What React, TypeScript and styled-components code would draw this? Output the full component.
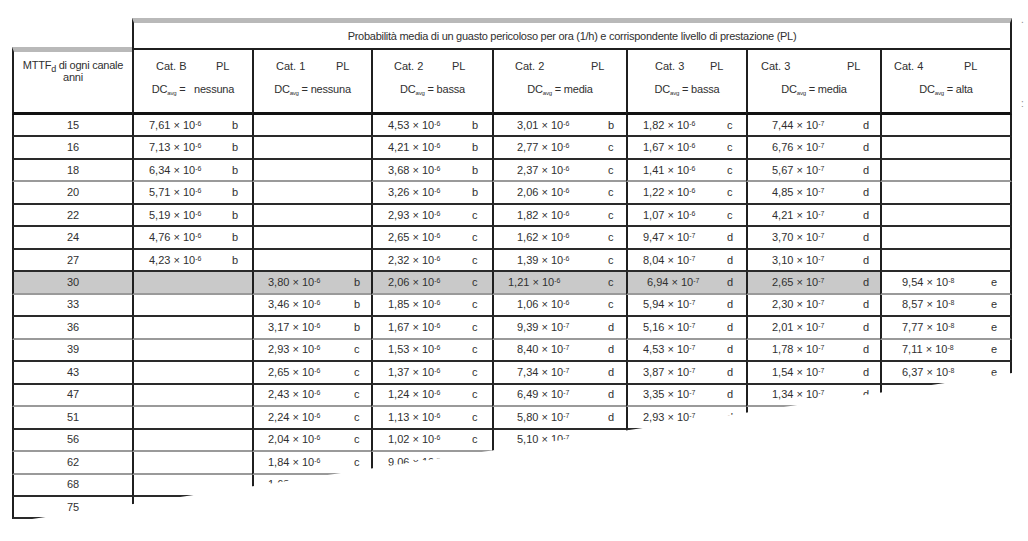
import styled, { createGlobalStyle } from 'styled-components';

const GlobalStyle = createGlobalStyle`
  html, body { margin: 0; padding: 0; background: #fff; }
  body {
    font-family: "Liberation Sans", Arial, sans-serif;
    color: #303030;
    -webkit-font-smoothing: antialiased;
  }
`;

const LINE = '#1f1f1f';
const GRAY_RULE = '#9a9a9a';
const BAR = '#b9b9b9';
const SHADE = '#c9c9c9';

type Val = [string, string, string] | null;
type Rule = 'd' | 'g';

const WIDTHS = [120, 120, 119, 121, 134, 120, 134, 132];
const MTTF = [15, 16, 18, 20, 22, 24, 27, 30, 33, 36, 39, 43, 47, 51, 56, 62, 68, 75];
const RULES: Rule[] = ['d', 'd', 'g', 'd', 'd', 'd', 'd', 'g', 'd', 'g', 'd', 'd', 'g', 'd', 'g', 'g', 'd', 'd'];
const SHADED_ROW = 7;

const fill = (n: number): Val[] => Array.from({ length: n }, () => null);
const list = (items: string, exp: string, pl: string): Val[] =>
  items.split(' ').map((m) => [m, exp, pl] as Val);

interface Column {
  cat: string;
  dc: string;
  catX: number;
  plX: number;
  pad: number;
  lx: number;
  shade: boolean;
  data: Val[];
  padFix?: Record<number, number>;
}

const COLUMNS: Column[] = [
  {
    cat: 'Cat. B', dc: '=\u00a0\u00a0 nessuna', catX: 24, plX: 84, pad: 17, lx: 100, shade: true,
    data: [...list('7,61 7,13 6,34 5,71 5,19 4,76 4,23', '-6', 'b'), ...fill(11)],
  },
  {
    cat: 'Cat. 1', dc: '= nessuna', catX: 24, plX: 84, pad: 16, lx: 102, shade: true,
    data: [
      ...fill(7),
      ...list('3,80 3,46 3,17', '-6', 'b'),
      ...list('2,93 2,65 2,43 2,24 2,04 1,84 1,68 1,52', '-6', 'c'),
    ],
  },
  {
    cat: 'Cat. 2', dc: '= bassa', catX: 23, plX: 81, pad: 17, lx: 101, shade: true,
    data: [
      ...list('4,53 4,21 3,68 3,26', '-6', 'b'),
      ...list('2,93 2,65 2,32 2,06 1,85 1,67 1,53 1,37 1,24 1,13 1,02', '-6', 'c'),
      ...list('9,06 8,17 7,31', '-7', 'd'),
    ],
  },
  {
    cat: 'Cat. 2', dc: '= media', catX: 23, plX: 99, pad: 25, lx: 116, shade: true,
    padFix: { 7: 16 },
    data: [
      ...list('3,01', '-6', 'b'),
      ...list('2,77 2,37 2,06 1,82 1,62 1,39 1,21 1,06', '-6', 'c'),
      ...list('9,39 8,40 7,34 6,49 5,80 5,10 4,43 3,84 3,26', '-7', 'd'),
    ],
  },
  {
    cat: 'Cat. 3', dc: '= bassa', catX: 29, plX: 84, pad: 17, lx: 101, shade: true,
    padFix: { 7: 21 },
    data: [
      ...list('1,82 1,67 1,41 1,22 1,07', '-6', 'c'),
      ...list('9,47 8,04 6,94 5,94 5,16 4,53 3,87 3,35 2,93 2,52 2,10 1,78 1,48', '-7', 'd'),
    ],
  },
  {
    cat: 'Cat. 3', dc: '= media', catX: 15, plX: 101, pad: 26, lx: 117, shade: true,
    data: [...list('7,44 6,76 5,67 4,85 4,21 3,70 3,10 2,65 2,30 2,01 1,78 1,54 1,34', '-7', 'd'), ...fill(5)],
  },
  {
    cat: 'Cat. 4', dc: '= alta', catX: 14, plX: 84, pad: 22, lx: 111, shade: false,
    data: [...fill(7), ...list('9,54 8,57 7,77 7,11 6,37', '-8', 'e'), ...fill(6)],
  },
];

export default function App() {
  return (
    <>
      <GlobalStyle />
      <Page>
        <Table>
          <Corner>
            MTTF<Sub>d</Sub> di ogni canale
            <br />
            anni
          </Corner>
          <TitleCell>
            Probabilità media di un guasto pericoloso per ora (1/h) e corrispondente livello di prestazione (PL)
          </TitleCell>

          {COLUMNS.map((c, i) => (
            <CatHead key={`h${i}`} $last={i === COLUMNS.length - 1}>
              <CatLine $catX={c.catX} $plX={c.plX}>
                <span>{c.cat}</span>
                <span>PL</span>
              </CatLine>
              <DcLine>
                DC<Avg>avg</Avg> {c.dc}
              </DcLine>
            </CatHead>
          ))}

          {MTTF.map((years, r) => (
            <Row key={years} years={years} r={r} />
          ))}
        </Table>
        <Marks>
          <span>.</span>
          <span>:</span>
        </Marks>
      </Page>
    </>
  );
}

function Row({ years, r }: { years: number; r: number }) {
  const rule = RULES[r];
  const shaded = r === SHADED_ROW;
  return (
    <>
      <NumCell $rule={rule} $shade={shaded}>
        {years}
      </NumCell>
      {COLUMNS.map((c, i) => {
        const v = c.data[r];
        const pad = c.padFix?.[r] ?? c.pad;
        return (
          <ValCell
            key={i}
            $rule={rule}
            $shade={shaded && c.shade}
            $last={i === COLUMNS.length - 1}
            $lx={c.lx}
          >
            {v && (
              <>
                <Value $pad={pad}>
                  {v[0]} × 10<Exp>{v[1]}</Exp>
                </Value>
                <span>{v[2]}</span>
              </>
            )}
          </ValCell>
        );
      })}
    </>
  );
}

const Page = styled.div`
  display: flex;
  align-items: flex-start;
  padding: 18px 0 0 12px;
`;

const Table = styled.div`
  display: grid;
  grid-template-columns: ${WIDTHS.map((w) => `${w}px`).join(' ')};
  grid-template-rows: 32px 65px repeat(18, 22.47px);
  font-size: 11px;
  line-height: 13px;
  /* torn lower edge of the scanned page */
  clip-path: polygon(0 0, 100% 0, 100% 355px, 0 504px);
`;

const Corner = styled.div`
  grid-column: 1;
  grid-row: 1 / 3;
  margin-top: 29px;
  border-top: 5px solid ${BAR};
  border-left: 2px solid ${LINE};
  border-bottom: 3px solid #111;
  padding-top: 7px;
  text-align: center;
  line-height: 12px;
  letter-spacing: -0.25px;
`;

const Sub = styled.sub`
  font-size: 9px;
  vertical-align: -3px;
  line-height: 0;
`;

const TitleCell = styled.div`
  grid-column: 2 / 9;
  grid-row: 1;
  border-top: 5px solid ${BAR};
  border-left: 2px solid ${LINE};
  border-right: 2px solid ${LINE};
  border-bottom: 2px solid ${LINE};
  display: flex;
  align-items: center;
  justify-content: center;
  padding-top: 1px;
  letter-spacing: -0.27px;
`;

const CatHead = styled.div<{ $last?: boolean }>`
  grid-row: 2;
  border-left: 2px solid ${LINE};
  border-right: ${(p) => (p.$last ? `2px solid ${LINE}` : 'none')};
  border-bottom: 3px solid #111;
  padding-top: 10px;
  display: flex;
  flex-direction: column;
`;

const CatLine = styled.div<{ $catX: number; $plX: number }>`
  display: grid;
  grid-template-columns: ${(p) => p.$plX - p.$catX}px auto;
  padding-left: ${(p) => p.$catX - 2}px;
`;

const DcLine = styled.div`
  margin-top: 10px;
  text-align: center;
  white-space: pre;
  letter-spacing: -0.2px;
`;

const Avg = styled.sub`
  font-size: 6px;
  vertical-align: -2px;
  line-height: 0;
`;

const Cell = styled.div<{ $rule: Rule; $shade?: boolean; $last?: boolean }>`
  border-left: 2px solid ${LINE};
  border-right: ${(p) => (p.$last ? `2px solid ${LINE}` : 'none')};
  border-bottom: 2px solid ${(p) => (p.$rule === 'd' ? '#2a2a2a' : GRAY_RULE)};
  background: ${(p) => (p.$shade ? SHADE : '#fff')};
  display: flex;
  align-items: center;
  white-space: nowrap;
`;

const NumCell = styled(Cell)`
  justify-content: center;
`;

const ValCell = styled(Cell)<{ $lx: number }>`
  display: grid;
  grid-template-columns: ${(p) => p.$lx - 2}px 1fr;
  align-items: center;
`;

const Value = styled.span<{ $pad: number }>`
  padding-left: ${(p) => p.$pad - 2}px;
`;

const Exp = styled.sup`
  font-size: 7px;
  vertical-align: 3px;
  line-height: 0;
`;

const Marks = styled.div`
  display: flex;
  flex-direction: column;
  gap: 72px;
  padding-left: 9px;
  margin-top: -4px;
  color: #8a8a8a;
  font-size: 10px;
  line-height: 12px;
`;
